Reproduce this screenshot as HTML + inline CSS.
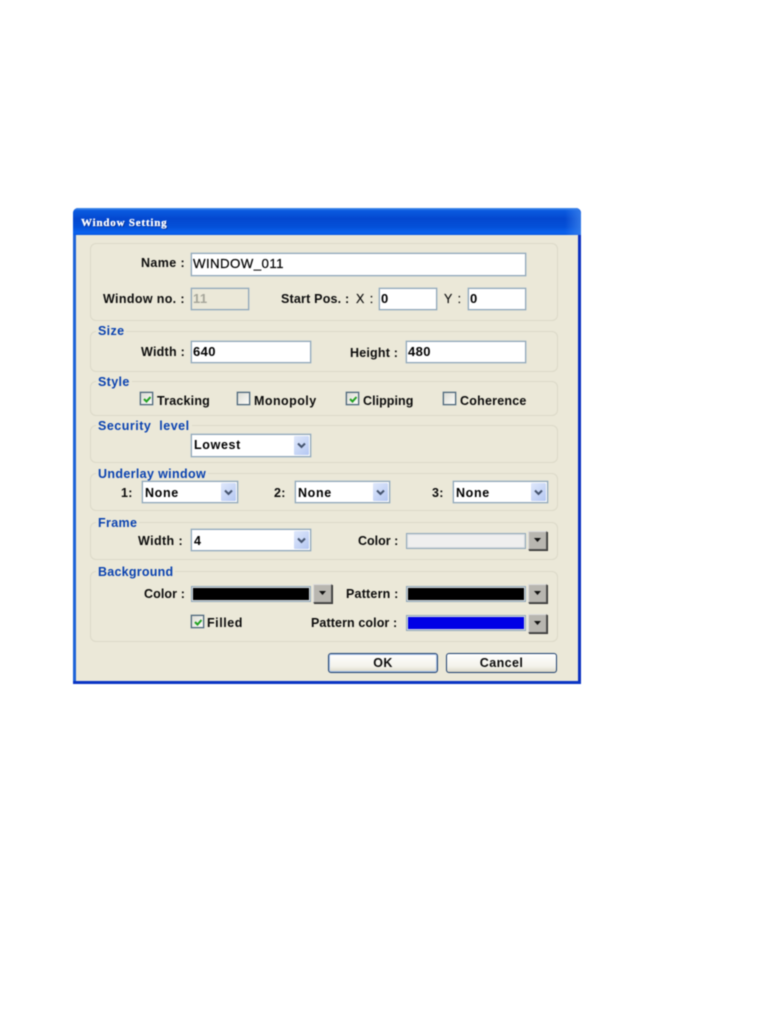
<!DOCTYPE html>
<html>
<head>
<meta charset="utf-8">
<style>
html,body{margin:0;padding:0;background:#fff;width:768px;height:1024px;overflow:hidden}
body{position:relative;font-family:"Liberation Sans",sans-serif}
#w{position:absolute;left:0;top:0;width:768px;height:1024px;filter:blur(.45px)}
#w div{position:absolute;box-sizing:border-box}
.t{font-size:12.5px;font-weight:bold;color:#0c0c0c;white-space:nowrap;letter-spacing:.25px;line-height:16px;height:16px}
.h{font-size:12.5px;font-weight:bold;color:#0a42b0;white-space:nowrap;letter-spacing:.35px;line-height:14px;height:14px;background:#ebe8d8;padding:0 2px}
.g{left:90px;width:468px;border:1px solid #dcd9c8;border-radius:6px}
.i{background:#fff;border:1px solid #8fa6b8;box-shadow:0 0 0 .5px #b5c3cc;font-size:13px;font-weight:bold;color:#000;padding-left:1px;letter-spacing:.4px;line-height:19px}
.s{background:#fff;border:1px solid #8fa6b8;box-shadow:0 0 0 .5px #b5c3cc;font-size:12.5px;font-weight:bold;color:#000;padding-left:2px;letter-spacing:.65px;line-height:21px}
.a{right:1px;top:1px;bottom:1px;width:15px;background:linear-gradient(135deg,#dfe8fb,#b4c7f2);border-radius:1px}
.a svg{position:absolute;left:3px;top:6px}
.c{border:1px solid #8fa6b8;padding:0;background:#000;box-shadow:inset 0 0 0 1px #d8dde0}
.b{width:19px;height:19px;background:#b8b6b0;border:1px solid #555;border-top-color:#ddd;border-left-color:#ddd;box-shadow:1px 1px 0 #333}
.b svg{position:absolute;left:4px;top:6px}
.k{width:13px;height:13px;border:1px solid #4a6478;box-shadow:0 0 0 .4px #7a8e9c;background:linear-gradient(135deg,#dcdcd4,#fbfbf8)}
.k svg{position:absolute;left:1px;top:1px}
.btn{height:20px;border:1px solid #1d3f6e;border-radius:3px;background:linear-gradient(#fff,#f3f2ea 70%,#dcd8c8);text-align:center;font-size:12.5px;font-weight:bold;color:#0c0c0c;letter-spacing:.4px;line-height:18px}
</style>
</head>
<body>
<div id="w">
  <!-- window -->
  <div style="left:73px;top:208px;width:508px;height:476px;border-radius:5px 5px 0 0;background:linear-gradient(90deg,#1d63d8 0,#1d63d8 3px,#0a2fc0 3px)"></div>
  <div style="left:73px;top:681px;width:508px;height:3px;background:#0a35c4"></div>
  <div style="left:73px;top:208px;width:508px;height:27px;border-radius:5px 5px 0 0;background:linear-gradient(#4a90ea 0,#0a5ae0 10%,#0448d0 40%,#0450d8 70%,#0a62ee 90%,#0858e0 100%)"></div>
  <div style="left:565px;top:209px;width:16px;height:26px;border-radius:0 5px 0 0;background:linear-gradient(90deg,rgba(60,130,235,0),rgba(60,130,235,.8))"></div>
  <div style="left:76px;top:235px;width:502px;height:446px;background:#ebe8d8"></div>
  <div style="left:81px;top:216px;height:15px;font:bold 11px/15px 'Liberation Serif',serif;color:#fff;letter-spacing:.8px;-webkit-text-stroke:.3px #fff;text-shadow:1px 1px 0 #0a2f90;white-space:nowrap">Window Setting</div>

  <!-- groups -->
  <div class="g" style="top:243px;height:78px"></div>
  <div class="g" style="top:331px;height:41px"></div>
  <div class="g" style="top:381px;height:35px"></div>
  <div class="g" style="top:425px;height:38px"></div>
  <div class="g" style="top:473px;height:38px"></div>
  <div class="g" style="top:522px;height:38px"></div>
  <div class="g" style="top:571px;height:71px"></div>

  <div class="h" style="left:96px;top:324px">Size</div>
  <div class="h" style="left:96px;top:375px">Style</div>
  <div class="h" style="left:96px;top:419px;letter-spacing:.5px">Security&nbsp; level</div>
  <div class="h" style="left:96px;top:467px">Underlay window</div>
  <div class="h" style="left:96px;top:516px">Frame</div>
  <div class="h" style="left:96px;top:565px;letter-spacing:.25px">Background</div>

  <!-- name group -->
  <div class="t" style="left:141px;top:255px;letter-spacing:.4px">Name :</div>
  <div class="i" style="left:191px;top:253px;width:335px;height:23px;font-weight:normal;font-size:13.3px;line-height:20px;color:#000;-webkit-text-stroke:.2px #000">WINDOW_011</div>
  <div class="t" style="left:103px;top:291px;letter-spacing:.35px">Window no. :</div>
  <div class="i" style="left:191px;top:288px;width:58px;height:22px;background:#ebe8d8;color:#a5a59a">11</div>
  <div class="t" style="left:281px;top:291px;letter-spacing:.2px">Start Pos. :</div>
  <div class="t" style="left:356px;top:291px;font-weight:normal;letter-spacing:1px;-webkit-text-stroke:.2px #222">X :</div>
  <div class="i" style="left:379px;top:288px;width:58px;height:22px">0</div>
  <div class="t" style="left:444px;top:291px;font-weight:normal;letter-spacing:1px;-webkit-text-stroke:.2px #222">Y :</div>
  <div class="i" style="left:468px;top:288px;width:58px;height:22px">0</div>

  <!-- size -->
  <div class="t" style="left:141px;top:344px">Width :</div>
  <div class="i" style="left:191px;top:341px;width:120px;height:22px">640</div>
  <div class="t" style="left:350px;top:345px;letter-spacing:.2px">Height :</div>
  <div class="i" style="left:406px;top:341px;width:120px;height:22px">480</div>

  <!-- style -->
  <div class="k" style="left:140px;top:392px"><svg width="11" height="11"><path d="M2 5L4.5 7.5L8.5 3" fill="none" stroke="#21a121" stroke-width="2"/></svg></div>
  <div class="t" style="left:157px;top:393px;letter-spacing:.2px">Tracking</div>
  <div class="k" style="left:237px;top:392px"></div>
  <div class="t" style="left:254px;top:393px;letter-spacing:.45px">Monopoly</div>
  <div class="k" style="left:346px;top:392px"><svg width="11" height="11"><path d="M2 5L4.5 7.5L8.5 3" fill="none" stroke="#21a121" stroke-width="2"/></svg></div>
  <div class="t" style="left:363px;top:393px;letter-spacing:.05px">Clipping</div>
  <div class="k" style="left:443px;top:392px"></div>
  <div class="t" style="left:460px;top:393px;letter-spacing:.22px">Coherence</div>

  <!-- security -->
  <div class="s" style="left:191px;top:434px;width:120px;height:23px">Lowest<div class="a"><svg width="9" height="8"><path d="M1 1.5L4.5 5L8 1.5" fill="none" stroke="#44536e" stroke-width="2"/></svg></div></div>

  <!-- underlay -->
  <div class="t" style="left:121px;top:485px">1:</div>
  <div class="s" style="left:142px;top:481px;width:96px;height:22px;line-height:23px">None<div class="a"><svg width="9" height="8"><path d="M1 1.5L4.5 5L8 1.5" fill="none" stroke="#44536e" stroke-width="2"/></svg></div></div>
  <div class="t" style="left:274px;top:485px">2:</div>
  <div class="s" style="left:295px;top:481px;width:95px;height:22px;line-height:23px">None<div class="a"><svg width="9" height="8"><path d="M1 1.5L4.5 5L8 1.5" fill="none" stroke="#44536e" stroke-width="2"/></svg></div></div>
  <div class="t" style="left:432px;top:485px">3:</div>
  <div class="s" style="left:453px;top:481px;width:95px;height:22px;line-height:23px">None<div class="a"><svg width="9" height="8"><path d="M1 1.5L4.5 5L8 1.5" fill="none" stroke="#44536e" stroke-width="2"/></svg></div></div>

  <!-- frame -->
  <div class="t" style="left:138px;top:533px;letter-spacing:.4px">Width :</div>
  <div class="s" style="left:191px;top:529px;width:120px;height:22px;line-height:22px">4<div class="a"><svg width="9" height="8"><path d="M1 1.5L4.5 5L8 1.5" fill="none" stroke="#44536e" stroke-width="2"/></svg></div></div>
  <div class="t" style="left:358px;top:533px;letter-spacing:0">Color :</div>
  <div class="c" style="left:406px;top:533px;width:120px;height:16px;background:#efefef"></div>
  <div class="b" style="left:528px;top:531px"><svg width="9" height="5"><path d="M1 0H8L4.5 4Z" fill="#111"/></svg></div>

  <!-- background -->
  <div class="t" style="left:144px;top:586px;letter-spacing:.1px">Color :</div>
  <div class="c" style="left:191px;top:586px;width:120px;height:16px"></div>
  <div class="b" style="left:313px;top:584px"><svg width="9" height="5"><path d="M1 0H8L4.5 4Z" fill="#111"/></svg></div>
  <div class="t" style="left:346px;top:586px;letter-spacing:.2px">Pattern :</div>
  <div class="c" style="left:406px;top:586px;width:120px;height:16px"></div>
  <div class="b" style="left:528px;top:584px"><svg width="9" height="5"><path d="M1 0H8L4.5 4Z" fill="#111"/></svg></div>
  <div class="k" style="left:191px;top:615px"><svg width="11" height="11"><path d="M2 5L4.5 7.5L8.5 3" fill="none" stroke="#21a121" stroke-width="2"/></svg></div>
  <div class="t" style="left:207px;top:615px;letter-spacing:.55px">Filled</div>
  <div class="t" style="left:311px;top:615px;letter-spacing:.1px">Pattern color :</div>
  <div class="c" style="left:406px;top:615px;width:120px;height:16px;background:#0000e6"></div>
  <div class="b" style="left:528px;top:614px"><svg width="9" height="5"><path d="M1 0H8L4.5 4Z" fill="#111"/></svg></div>

  <!-- buttons -->
  <div class="btn" style="left:328px;top:653px;width:110px;box-shadow:inset 0 0 0 1px #a9c2e8">OK</div>
  <div class="btn" style="left:446px;top:653px;width:111px">Cancel</div>
</div>
</body>
</html>
